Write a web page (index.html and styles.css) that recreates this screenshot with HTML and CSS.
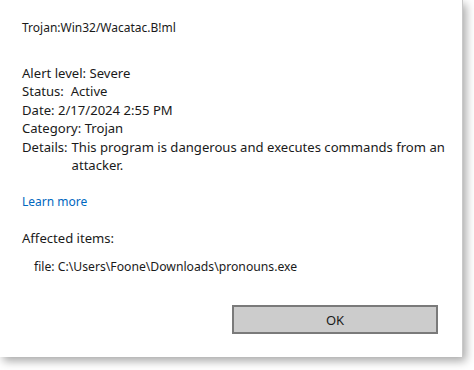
FILE: index.html
```html
<!DOCTYPE html>
<html lang="en">
<head>
    <meta charset="UTF-8">
    <title>Threat details</title>
    <link rel="stylesheet" href="styles.css">
</head>
<body>

<div class="dialog">
    <div class="threat-name">Trojan:Win32/Wacatac.B!ml</div>

    <div class="info">
        <div>Alert level: Severe</div>
        <div>Status:&nbsp; Active</div>
        <div>Date: 2/17/2024 2:55 PM</div>
        <div>Category: Trojan</div>
        <div class="details">
            <span class="label">Details:</span>
            <span class="value">This program is dangerous and executes commands from an attacker.</span>
        </div>
    </div>

    <a class="learn-more" href="#">Learn more</a>

    <div class="affected">Affected items:</div>
    <div class="file">file: C:\Users\Foone\Downloads\pronouns.exe</div>

    <div class="actions">
        <button class="btn-ok">OK</button>
    </div>
</div>

</body>
</html>
```

FILE: styles.css
```css
body {
    margin: 0;
    padding: 0;
    background-color: #ffffff;
    font-family: 'Noto Sans', sans-serif;
    color: #1a1a1a;
    width: 474px;
    height: 370px;
    overflow: hidden;
}

.dialog {
    width: 463px;
    height: 357px;
    box-sizing: border-box;
    padding: 19px 0 0 22px;
    background-color: white;
    border-right: 1px solid #c9c9c9;
    box-shadow: 3px 4px 9px rgba(0, 0, 0, 0.35);
    display: flex;
    flex-direction: column;
}

.threat-name {
    font-size: 12px;
    line-height: 18px;
}

.info {
    margin-top: 27px;
    font-size: 13.1px;
    line-height: 18.4px;
}

.details {
    display: flex;
    gap: 4px;
}

.details .value {
    width: 376px;
}

.learn-more {
    margin-top: 19px;
    font-size: 12px;
    line-height: 18px;
    color: #0067c0;
    text-decoration: none;
    align-self: flex-start;
}

.affected {
    margin-top: 18px;
    font-size: 13.1px;
    line-height: 18px;
}

.file {
    margin-top: 11px;
    margin-left: 12px;
    font-size: 12.2px;
    line-height: 18px;
}

.actions {
    margin-top: 29px;
    display: flex;
    justify-content: flex-end;
    padding-right: 24px;
}

.btn-ok {
    width: 206px;
    height: 29px;
    background-color: #cccccc;
    border: 2px solid #7a7a7a;
    font-family: 'Noto Sans', sans-serif;
    font-size: 13px;
    color: #1a1a1a;
    padding: 0;
}
```
